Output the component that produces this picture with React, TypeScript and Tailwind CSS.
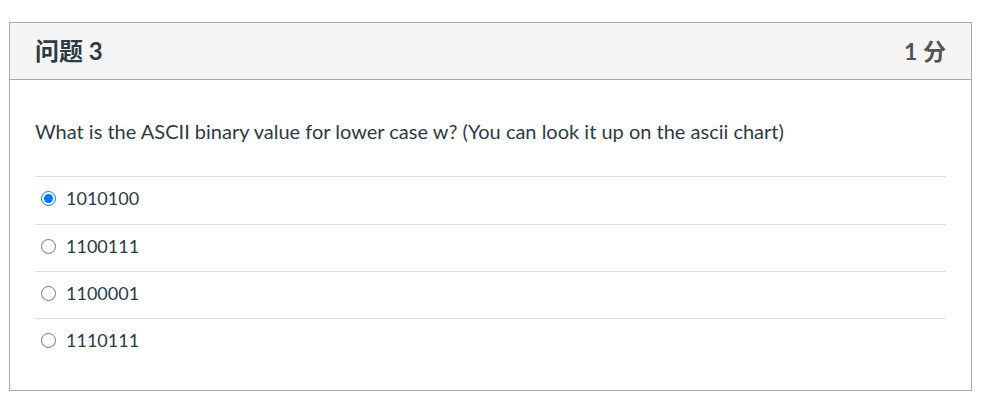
import React from "react";

const options = ["1010100", "1100111", "1100001", "1110111"];

export default function App() {
  return (
    <div className="w-[995px] h-[408px] bg-white pt-[22px] pl-[9px]" style={{ fontFamily: "Lato, 'Noto Sans CJK SC', sans-serif" }}>
      <div className="w-[963px] h-[369px] border border-[#aaaaaa] flex flex-col">
        <div className="h-[57px] bg-[#f5f5f5] border-b border-[#aaaaaa] flex items-center justify-between px-[25px]">
          <div className="text-[24px] font-bold text-[#2d3b45]">问题 3</div>
          <div className="text-[23px] font-bold text-[#555555]">1 分</div>
        </div>
        <div className="px-[25px] pt-[36px]">
          <p className="text-[20px] text-[#2d3b45] leading-[30px]">
            What is the ASCII binary value for lower case w? (You can look it up on the ascii chart)
          </p>
          <div className="mt-[30px]">
            {options.map((o, i) => (
              <label
                key={o}
                className={
                  (i === 0 ? "h-[48px] " : "h-[47px] ") +
                  "flex items-center border-t border-[#dddddd] pl-[6px]"
                }
              >
                <input type="radio" name="q3" defaultChecked={i === 0} className="w-[15px] h-[15px] m-0 -mt-[4px]" />
                <span className="ml-[10px] -mt-[4px] text-[18px] text-[#2d3b45]">{o}</span>
              </label>
            ))}
          </div>
        </div>
      </div>
    </div>
  );
}
